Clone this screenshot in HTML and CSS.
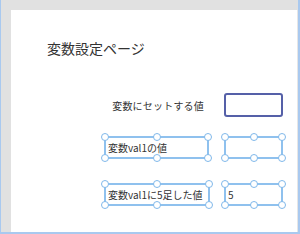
FILE: index.html
```html
<!DOCTYPE html>
<html lang="ja">
<head>
    <meta charset="UTF-8">
    <title>変数設定ページ</title>
    <link rel="stylesheet" href="styles.css">
</head>
<body>
    <div class="frame">
        <div class="canvas">
            <h1 class="title">変数設定ページ</h1>

            <div class="row row-input">
                <span class="label">変数にセットする値</span>
                <input type="text" class="value-input">
            </div>

            <div class="row row-sel">
                <div class="sel sel-label">
                    <span class="sel-text">変数val1の値</span>
                    <i class="h tl"></i><i class="h tm"></i><i class="h tr"></i>
                    <i class="h bl"></i><i class="h bm"></i><i class="h br"></i>
                </div>
                <div class="sel sel-value">
                    <span class="sel-text"></span>
                    <i class="h tl"></i><i class="h tm"></i><i class="h tr"></i>
                    <i class="h bl"></i><i class="h bm"></i><i class="h br"></i>
                </div>
            </div>

            <div class="row row-sel row-last">
                <div class="sel sel-label wide">
                    <span class="sel-text">変数val1に5足した値</span>
                    <i class="h tl"></i><i class="h tm"></i><i class="h tr"></i>
                    <i class="h bl"></i><i class="h bm"></i><i class="h br"></i>
                </div>
                <div class="sel sel-value">
                    <span class="sel-text">5</span>
                    <i class="h tl"></i><i class="h tm"></i><i class="h tr"></i>
                    <i class="h bl"></i><i class="h bm"></i><i class="h br"></i>
                </div>
            </div>
        </div>
    </div>
</body>
</html>
```

FILE: styles.css
```css
body {
    margin: 0;
    font-family: "Noto Sans CJK JP", "Noto Sans", sans-serif;
    color: #333;
}
.frame {
    width: 300px;
    height: 234px;
    box-sizing: border-box;
    background-color: #e1e1e1;
    border-left: 1px solid #a9c9ef;
    border-right: 2px solid #a9c9ef;
    border-bottom: 2px solid #a9c9ef;
    padding: 10px 0 0 10px;
    display: flex;
}
.canvas {
    flex: 1;
    background-color: #fff;
    border-right: 1px solid #e6e6e6;
    padding: 28px 14px 0 36px;
    display: flex;
    flex-direction: column;
}
.title {
    margin: 0;
    font-size: 14px;
    font-weight: normal;
    line-height: 20px;
    color: #333;
}
.row {
    display: flex;
    justify-content: flex-end;
    align-items: center;
}
.row-input {
    margin-top: 35px;
}
.label {
    font-size: 10px;
    letter-spacing: 0.2px;
    margin-right: 20px;
}
.value-input {
    width: 59px;
    height: 24px;
    box-sizing: border-box;
    border: 2px solid #5560a8;
    border-radius: 3px;
    padding: 0;
    margin: 0;
}
.row-sel {
    margin-top: 19px;
}
.row-last {
    margin-top: 24px;
}
.sel {
    position: relative;
    height: 23px;
    box-sizing: border-box;
    border: 2px solid #8fc1ee;
    display: flex;
    align-items: center;
}
.sel-label {
    width: 105px;
    margin-right: 15px;
}
.sel-label.wide {
    width: 106px;
    margin-right: 14px;
}
.sel-value {
    width: 59px;
}
.sel-text {
    font-size: 10px;
    padding-left: 2px;
    white-space: nowrap;
}
/* resize handles */
.h {
    position: absolute;
    width: 8px;
    height: 8px;
    box-sizing: border-box;
    border: 1.5px solid #7fb8ea;
    border-radius: 50%;
    background-color: #fff;
}
.tl, .tm, .tr { top: -5px; }
.bl, .bm, .br { bottom: -5px; }
.tl, .bl { left: -5px; }
.tr, .br { right: -5px; }
.tm, .bm { left: calc(50% - 4px); }
```
